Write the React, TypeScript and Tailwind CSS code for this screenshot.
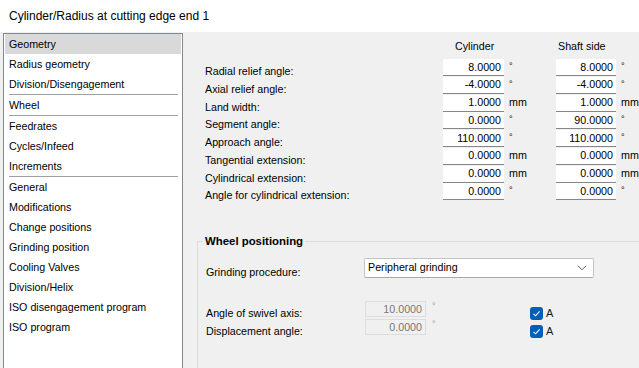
import React from "react";

const FONT = { fontFamily: '"Liberation Sans", Arial, sans-serif' };

type NavItem = { label: string; selected?: boolean } | "sep";

const nav: NavItem[] = [
  { label: "Geometry", selected: true },
  { label: "Radius geometry" },
  { label: "Division/Disengagement" },
  "sep",
  { label: "Wheel" },
  "sep",
  { label: "Feedrates" },
  { label: "Cycles/Infeed" },
  { label: "Increments" },
  "sep",
  { label: "General" },
  { label: "Modifications" },
  { label: "Change positions" },
  { label: "Grinding position" },
  { label: "Cooling Valves" },
  { label: "Division/Helix" },
  { label: "ISO disengagement program" },
  { label: "ISO program" },
];

type Row = { label: string; a: string; ua: string; b: string; ub: string };

const rows: Row[] = [
  { label: "Radial relief angle:", a: "8.0000", ua: "°", b: "8.0000", ub: "°" },
  { label: "Axial relief angle:", a: "-4.0000", ua: "°", b: "-4.0000", ub: "°" },
  { label: "Land width:", a: "1.0000", ua: "mm", b: "1.0000", ub: "mm" },
  { label: "Segment angle:", a: "0.0000", ua: "°", b: "90.0000", ub: "°" },
  { label: "Approach angle:", a: "110.0000", ua: "°", b: "110.0000", ub: "°" },
  { label: "Tangential extension:", a: "0.0000", ua: "mm", b: "0.0000", ub: "mm" },
  { label: "Cylindrical extension:", a: "0.0000", ua: "mm", b: "0.0000", ub: "mm" },
  { label: "Angle for cylindrical extension:", a: "0.0000", ua: "°", b: "0.0000", ub: "°" },
];

function Field({ value, width }: { value: string; width: string }) {
  return (
    <div
      className={`${width} h-[17px] bg-white border-b border-[#868686] flex items-center justify-end pr-[3px] text-[10.7px] text-black leading-none`}
    >
      {value}
    </div>
  );
}

function Unit({ u }: { u: string }) {
  return (
    <div className="w-[52px] pl-[5px] text-[10.7px] leading-none self-start pt-[2px] text-black">
      {u === "°" ? <span className="text-[9px] relative -top-[1px]">°</span> : u}
    </div>
  );
}

function Check() {
  return (
    <div className="w-[13px] h-[13px] rounded-[3px] bg-[#005fb8] flex items-center justify-center">
      <svg width="9" height="9" viewBox="0 0 9 9">
        <path d="M1.5 4.8 L3.6 6.8 L7.6 2.4" fill="none" stroke="white" strokeWidth="1.1" />
      </svg>
    </div>
  );
}

function DisabledField({ value }: { value: string }) {
  return (
    <div className="w-[61px] h-[16px] bg-[#f0f0f0] border border-[#dddddd] flex items-center justify-end pr-[3px] text-[10.7px] text-[#777777] leading-none">
      {value}
    </div>
  );
}

export default function App() {
  return (
    <div
      className="w-[639px] h-[368px] bg-[#f0f0f0] overflow-hidden flex flex-col text-black"
      style={FONT}
    >
      <div className="h-[32px] shrink-0 bg-white flex items-center pl-[9px] text-[12px] pb-[1px]">
        Cylinder/Radius at cutting edge end 1
      </div>
      <div className="flex flex-1 min-h-0">
        <div className="ml-[3px] mt-[1px] w-[180px] h-[400px] shrink-0 border border-[#828790] bg-white px-[1px] text-[10.7px]">
          {nav.map((n, i) =>
            n === "sep" ? (
              <div key={i} className="h-[1px] bg-[#a0a0a0] ml-[4px] mr-[3px]" />
            ) : (
              <div
                key={i}
                className={`h-[20px] flex items-center pl-[4px] ${n.selected ? "bg-[#d9d9d9]" : ""}`}
              >
                {n.label}
              </div>
            )
          )}
        </div>
        <div className="flex-1 flex flex-col">
          <div className="pl-[22px] pt-[8px] text-[10.7px]">
            <div className="flex h-[13px] items-center">
              <div className="w-[250px]" />
              <div className="w-[103px]">Cylinder</div>
              <div>Shaft side</div>
            </div>
            <div className="mt-[6px] flex flex-col">
              {rows.map((r) => (
                <div key={r.label} className="flex h-[17.75px]">
                  <div className="w-[238px] pt-[7px] leading-none">{r.label}</div>
                  <Field value={r.a} width="w-[61px]" />
                  <Unit u={r.ua} />
                  <Field value={r.b} width="w-[60px]" />
                  <div className="pl-[5px] text-[10.7px] leading-none pt-[2px]">
                    {r.ub === "°" ? <span className="text-[9px] relative -top-[1px]">°</span> : r.ub}
                  </div>
                </div>
              ))}
            </div>
          </div>
          <fieldset className="ml-[14px] mt-[33px] flex-1 border-t border-l border-[#dcdcdc] pl-[8px]">
            <legend className="-ml-[3px] px-[2px] font-bold text-[11.4px] leading-[14px]">
              Wheel positioning
            </legend>
            <div className="flex items-center mt-[7px] text-[10.7px]">
              <div className="w-[158px] pt-[9px]">Grinding procedure:</div>
              <div className="w-[230px] h-[20px] bg-white border border-[#c4c4c4] border-b-[#a8a8a8] rounded-[2px] flex items-center justify-between pl-[3px] pr-[6px]">
                <span>Peripheral grinding</span>
                <svg width="10" height="6" viewBox="0 0 10 6">
                  <path d="M1 0.8 L5 4.8 L9 0.8" fill="none" stroke="#606060" strokeWidth="1" />
                </svg>
              </div>
            </div>
            <div className="mt-[21px] flex flex-col gap-[2px] text-[10.7px]">
              {[
                { l: "Angle of swivel axis:", v: "10.0000" },
                { l: "Displacement angle:", v: "0.0000" },
              ].map((r) => (
                <div key={r.l} className="flex h-[16px]">
                  <div className="w-[159px] pt-[7px] leading-none">{r.l}</div>
                  <DisabledField value={r.v} />
                  <div className="w-[104px] pl-[6px] text-[9px] text-[#999999] leading-none pt-[1px]">°</div>
                  <div className="flex items-center gap-[3px] pt-[8px]">
                    <Check />
                    <span className="leading-none text-[11px] text-[#1a1a1a]" style={{ fontWeight: 500 }}>A</span>
                  </div>
                </div>
              ))}
            </div>
          </fieldset>
        </div>
      </div>
    </div>
  );
}
